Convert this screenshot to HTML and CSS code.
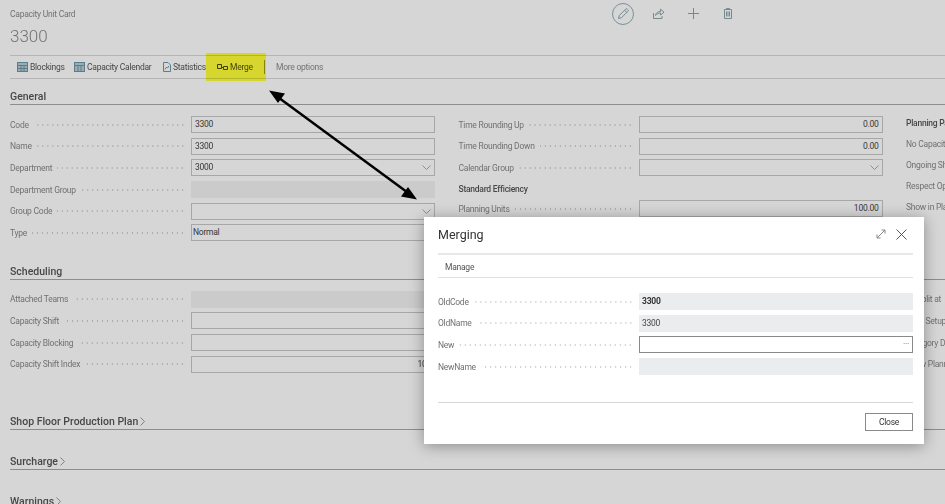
FILE: index.html
```html
<!DOCTYPE html>
<html lang="en">
<head>
<meta charset="utf-8">
<title>Capacity Unit Card</title>
<link rel="stylesheet" href="styles.css">
</head>
<body>
<div class="page">
  <header class="head">
    <div class="head-text">
      <div class="caption">Capacity Unit Card</div>
      <div class="record">3300</div>
    </div>
    <div class="head-tools">
      <span class="edit-ring"><svg width="14" height="14" viewBox="0 0 14 14"><path d="M2.500 11.500l.8-3L9.600 2.200a1.200 1.200 0 0 1 1.800 0l.4.4a1.200 1.200 0 0 1 0 1.800L5.500 10.700z M8.600 3.200l2.200 2.200" class="ico"/></svg></span>
      <svg class="tool-share" width="13" height="13" viewBox="0 0 13 13"><path d="M1.500 6v5.500h8.500V9 M3.500 8.500C4 5.500 6 4.500 8.500 4.500V2.200L12 5.200 8.500 8V6C6.500 6 5 6.800 3.500 8.500z" class="ico"/></svg>
      <svg class="tool-add" width="11" height="11" viewBox="0 0 11 11"><path d="M5.500 0v11M0 5.500h11" class="ico"/></svg>
      <svg class="tool-del" width="8" height="11" viewBox="0 0 8 11"><path d="M.5 1.500h7v9h-7z M2.500 1.500V.5h3v1 M2.500 3.500v5 M4 3.500v5 M5.500 3.500v5" class="ico"/></svg>
    </div>
  </header>

  <nav class="actions">
    <span class="action action-blockings">
      <svg width="11" height="10" viewBox="0 0 11 10"><rect x=".5" y=".5" width="10" height="9" class="ico-fill"/><path d="M.5 3.500h10M.5 6.500h10M4 3.500v6M7 3.500v6" class="ico-blue"/></svg>Blockings</span>
    <span class="action action-calendar">
      <svg width="11" height="10" viewBox="0 0 11 10"><rect x=".5" y=".5" width="10" height="9" class="ico-fill"/><path d="M.5 3.500h10M4 3.500v6M7 3.500v6" class="ico-blue"/></svg>Capacity Calendar</span>
    <span class="action action-stats">
      <svg width="8" height="10" viewBox="0 0 8 10"><path d="M.5.500h4.500L7.500 3v6.500h-7z M2 7.500l1.500-2.500 1 1L6 4" class="ico-blue"/></svg>Statistics</span>
    <span class="action action-merge">
      <span class="highlight"></span>
      <svg width="11" height="7" viewBox="0 0 11 7"><path d="M.5.500h4v4h-4z M6.500 2.500h4v3h-4z M4.500 3.500h2" class="ico-dark"/></svg>Merge
    </span>
    <span class="action-sep"></span>
    <span class="more">More options</span>
  </nav>

  <section class="section section-general">
    <h2 class="section-title">General</h2>
    <div class="columns">
      <div class="column">
        <div class="row"><span class="label">Code</span><span class="dots"></span><span class="input">3300</span></div>
        <div class="row"><span class="label">Name</span><span class="dots"></span><span class="input">3300</span></div>
        <div class="row"><span class="label">Department</span><span class="dots"></span><span class="input select">3000<svg class="chev" width="9" height="5" viewBox="0 0 9 5"><path d="M.5.500l4 4 4-4"/></svg></span></div>
        <div class="row"><span class="label">Department Group</span><span class="dots"></span><span class="input readonly"></span></div>
        <div class="row"><span class="label">Group Code</span><span class="dots"></span><span class="input select"><svg class="chev" width="9" height="5" viewBox="0 0 9 5"><path d="M.5.500l4 4 4-4"/></svg></span></div>
        <div class="row"><span class="label">Type</span><span class="dots"></span><span class="input input-option">Normal</span></div>
      </div>
      <div class="column">
        <div class="row"><span class="label">Time Rounding Up</span><span class="dots"></span><span class="input num">0.00</span></div>
        <div class="row"><span class="label">Time Rounding Down</span><span class="dots"></span><span class="input num">0.00</span></div>
        <div class="row"><span class="label">Calendar Group</span><span class="dots"></span><span class="input select"><svg class="chev" width="9" height="5" viewBox="0 0 9 5"><path d="M.5.500l4 4 4-4"/></svg></span></div>
        <div class="row row-group"><span class="group-title">Standard Efficiency</span></div>
        <div class="row"><span class="label">Planning Units</span><span class="dots"></span><span class="input num">100.00</span></div>
      </div>
      <div class="column column-compact">
        <div class="row"><span class="group-title">Planning Parameters</span></div>
        <div class="row"><span class="label">No Capacity Check</span></div>
        <div class="row"><span class="label">Ongoing Shift</span></div>
        <div class="row"><span class="label">Respect Operation</span></div>
        <div class="row"><span class="label">Show in Plan</span></div>
      </div>
    </div>
  </section>

  <section class="section section-scheduling">
    <h2 class="section-title">Scheduling</h2>
    <div class="columns">
      <div class="column">
        <div class="row"><span class="label">Attached Teams</span><span class="dots"></span><span class="input readonly"></span></div>
        <div class="row"><span class="label">Capacity Shift</span><span class="dots"></span><span class="input"></span></div>
        <div class="row"><span class="label">Capacity Blocking</span><span class="dots"></span><span class="input"></span></div>
        <div class="row"><span class="label">Capacity Shift Index</span><span class="dots"></span><span class="input num">100</span></div>
      </div>
      <div class="column"></div>
      <div class="column">
        <div class="row"><span class="label">To Split at</span></div>
        <div class="row"><span class="label">Limit Setup</span></div>
        <div class="row"><span class="label">Category Date</span></div>
        <div class="row"><span class="label">Show Planning</span></div>
      </div>
    </div>
  </section>

  <section class="fold fold-shop"><h2 class="section-title">Shop Floor Production Plan<svg class="fold-chev" width="5" height="9" viewBox="0 0 5 9"><path d="M.5.500l4 4-4 4"/></svg></h2></section>
  <section class="fold fold-next"><h2 class="section-title">Surcharge<svg class="fold-chev" width="5" height="9" viewBox="0 0 5 9"><path d="M.5.500l4 4-4 4"/></svg></h2></section>
  <section class="fold fold-next"><h2 class="section-title">Warnings<svg class="fold-chev" width="5" height="9" viewBox="0 0 5 9"><path d="M.5.500l4 4-4 4"/></svg></h2></section>
</div>

<div class="overlay"></div>

<svg class="arrow" width="945" height="504" viewBox="0 0 945 504">
  <path d="M275 95L411 195" class="arrow-line"/>
  <path d="M269 90.500L285 93.500 278 103z M417 199.500L401 196.500 408 187z" class="arrow-head"/>
</svg>

<div class="dialog">
  <div class="dialog-head">
    <h1 class="dialog-title">Merging</h1>
    <svg class="dialog-expand" width="10" height="10" viewBox="0 0 10 10"><path d="M1 9l8-8M5.500 1H9v3.500M1 5.500V9h3.500"/></svg>
    <svg class="dialog-close" width="11" height="11" viewBox="0 0 11 11"><path d="M.5.500l10 10M10.500.500l-10 10"/></svg>
  </div>
  <div class="dialog-bar">Manage</div>
  <div class="dialog-fields">
    <div class="row"><span class="label">OldCode</span><span class="dots"></span><span class="input readonly bold">3300</span></div>
    <div class="row"><span class="label">OldName</span><span class="dots"></span><span class="input readonly">3300</span></div>
    <div class="row"><span class="label">New</span><span class="dots"></span><span class="input focus"><span class="ellipsis">···</span></span></div>
    <div class="row"><span class="label">NewName</span><span class="dots"></span><span class="input readonly"></span></div>
  </div>
  <div class="dialog-foot"><span class="btn">Close</span></div>
</div>
</body>
</html>
```
FILE: styles.css
```css
* { box-sizing: border-box; }
html, body { margin: 0; height: 100%; overflow: hidden; background: #fff; }
body { font-family: Roboto, "Open Sans", "Liberation Sans", sans-serif; font-size: 8.500px; letter-spacing: -.25px; color: #555; width: 945px; height: 504px; position: relative; }
.page { width: 945px; height: 504px; padding: 0 0 0 10px; overflow: hidden; }

.head { display: flex; height: 55px; }
.head-text { width: 600px; padding-top: 9px; }
.caption { line-height: 11px; color: #8a8a8a; }
.record { font-size: 17px; letter-spacing: 0; line-height: 24px; margin-top: 4px; color: #8a8a8a; font-weight: 300; }
.head-tools { display: flex; align-items: center; height: 27px; margin-left: 2px; }
.edit-ring { width: 22px; height: 22px; border-radius: 50%; border: 1px solid #8fb0b3; display: flex; align-items: center; justify-content: center; }
.tool-share { margin-left: 18px; }
.tool-add { margin-left: 23px; }
.tool-del { margin-left: 25px; }
.ico { fill: none; stroke: #8aa6a9; stroke-width: 1; }
.ico-blue { fill: none; stroke: #6d97ab; stroke-width: 1; }
.ico-fill { fill: #b9cdd6; stroke: #6d97ab; stroke-width: 1; }
.ico-dark { fill: none; stroke: #4a4a4a; stroke-width: 1; }

.actions { height: 24px; border-top: 1px solid #d8d8d8; border-bottom: 1px solid #d8d8d8; display: flex; align-items: center; padding-left: 7px; color: #555; }
.action { display: flex; align-items: center; gap: 2px; position: relative; white-space: nowrap; }
.action-blockings { width: 57px; }
.action-calendar { width: 89px; }
.action-stats { width: 54px; }
.action-merge { width: 47px; }
.highlight { position: absolute; left: -11px; width: 60px; top: -9px; height: 28px; background: #ffff38; mix-blend-mode: multiply; }
.action-sep { width: 1px; height: 14px; background: #9aa12a; }
.more { margin-left: 11px; color: #8a8a8a; }

.section-title { margin: 0; padding-top: 1px; font-size: 10.500px; letter-spacing: 0; line-height: 14px; font-weight: 500; color: #555; display: flex; align-items: center; gap: 2px; }
.section-general { margin-top: 10px; }
.section-general .section-title, .section-scheduling .section-title { border-bottom: 1px solid #a8a8a8; }
.section-scheduling { margin-top: 20px; }
.columns { display: grid; grid-template-columns: 425px 424px 425px; column-gap: 23.500px; padding-top: 9px; }
.column { min-width: 0; }
.column-compact { margin-top: -2px; }
.column-compact .row { height: 21px; }

.row { display: flex; align-items: center; height: 21.600px; white-space: nowrap; }
.row-group { height: 19px; padding-top: 1px; }
.label { color: #888; }
.group-title { font-weight: 500; color: #555; }
.dots { flex: 1; height: 2px; margin: 0 6px 0 5px; background-image: radial-gradient(circle, #ccc .6px, transparent .7px); background-size: 5px 2px; background-repeat: repeat-x; background-position: right; }
.input { position: relative; flex: none; width: 244px; height: 17px; border: 1px solid #c8c8c8; padding: 0 3px; line-height: 15px; color: #444; background: #fff; }
.input-option { padding-left: 1px; }
.num { text-align: right; }
.readonly { border: 0; background: #f2f2f2; line-height: 17px; }
.chev { position: absolute; right: 3px; top: 5px; fill: none; stroke: #aaa; }

.fold { border-bottom: 1px solid #a8a8a8; height: 16px; }
.fold-shop { margin-top: 39px; }
.fold-next { margin-top: 24px; }
.fold-chev { fill: none; stroke: #999; }

.overlay { position: absolute; inset: 0; background: rgba(0, 0, 0, .16); }
.arrow { position: absolute; left: 0; top: 0; }
.arrow-line { stroke: #000; stroke-width: 2.500; fill: none; }
.arrow-head { fill: #000; }

.dialog { position: absolute; left: 424px; top: 217px; width: 500px; height: 227px; background: #fff; box-shadow: 0 2px 14px rgba(0, 0, 0, .35); padding: 0 11px 0 14px; display: flex; flex-direction: column; }
.dialog-head { height: 38px; display: flex; align-items: center; border-bottom: 2px solid #e8e8e8; padding-bottom: 2px; }
.dialog-title { margin: 0; font-size: 12.500px; letter-spacing: 0; font-weight: 400; color: #333; flex: 1; }
.dialog-expand { fill: none; stroke: #888; margin-right: 10px; }
.dialog-close { fill: none; stroke: #555; margin-right: 6px; }
.dialog-bar { height: 23px; line-height: 24px; padding-left: 7px; border-bottom: 1px solid #e0e0e0; color: #555; }
.dialog-fields { padding-top: 13px; height: 125px; border-bottom: 1px solid #d8d8d8; }
.dialog .label { color: #707070; }
.dialog .input { width: 274px; }
.dialog .readonly { background: #ebecee; }
.bold { font-weight: 700; color: #333; }
.focus { border-color: #8a8a8a; }
.ellipsis { position: absolute; right: 3px; top: 0; color: #666; }
.dialog-foot { display: flex; justify-content: flex-end; padding-top: 10px; }
.btn { width: 48px; height: 18px; border: 1px solid #8a8a8a; text-align: center; line-height: 16px; color: #333; }
```
